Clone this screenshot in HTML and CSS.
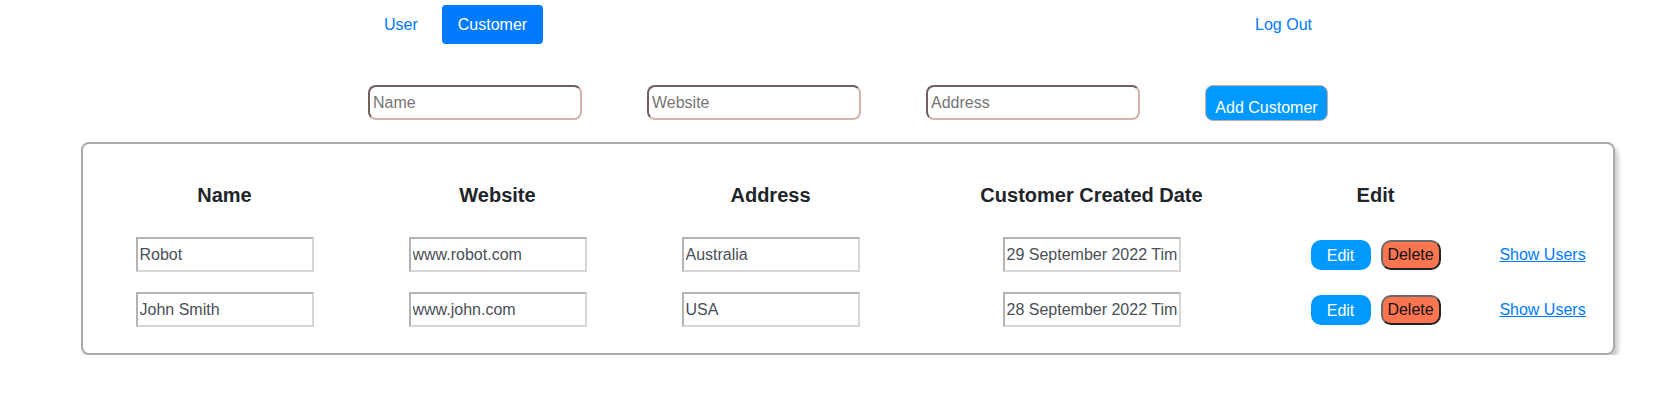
FILE: index.html
```html
<!DOCTYPE html>
<html lang="en">
<head>
<meta charset="utf-8">
<title>Customers</title>
<link rel="stylesheet" href="styles.css">
</head>
<body>
<nav class="nav">
  <div class="nav-left">
    <a class="nav-link" href="#">User</a>
    <a class="nav-link active" href="#">Customer</a>
  </div>
  <a class="nav-link" href="#">Log Out</a>
</nav>

<form class="add-form">
  <input class="add-input" type="text" placeholder="Name">
  <input class="add-input" type="text" placeholder="Website">
  <input class="add-input" type="text" placeholder="Address">
  <button class="add-btn" type="button">Add Customer</button>
</form>

<div class="card">
  <div class="table">
    <div class="th">Name</div>
    <div class="th">Website</div>
    <div class="th">Address</div>
    <div class="th">Customer Created Date</div>
    <div class="th">Edit</div>
    <div class="th"></div>

    <div class="td"><input class="cell-input" type="text" value="Robot"></div>
    <div class="td"><input class="cell-input" type="text" value="www.robot.com"></div>
    <div class="td"><input class="cell-input" type="text" value="Australia"></div>
    <div class="td"><input class="cell-input" type="text" value="29 September 2022 Time: 10:15"></div>
    <div class="td actions"><button class="btn-edit" type="button">Edit</button><button class="btn-delete" type="button">Delete</button></div>
    <div class="td"><a class="show-link" href="#">Show Users</a></div>

    <div class="td"><input class="cell-input" type="text" value="John Smith"></div>
    <div class="td"><input class="cell-input" type="text" value="www.john.com"></div>
    <div class="td"><input class="cell-input" type="text" value="USA"></div>
    <div class="td"><input class="cell-input" type="text" value="28 September 2022 Time: 09:40"></div>
    <div class="td actions"><button class="btn-edit" type="button">Edit</button><button class="btn-delete" type="button">Delete</button></div>
    <div class="td"><a class="show-link" href="#">Show Users</a></div>
  </div>
</div>
</body>
</html>
```

FILE: styles.css
```css
* { box-sizing: border-box; }

body {
  margin: 0;
  font-family: "Liberation Sans", Arial, sans-serif;
  font-size: 16px;
  color: #212529;
  background: #fff;
}

.nav {
  display: flex;
  justify-content: space-between;
  align-items: center;
  margin-left: 368px;
  width: 960px;
  padding-top: 5px;
}

.nav-left {
  display: flex;
  gap: 8px;
}

.nav-link {
  display: block;
  padding: 8px 16px;
  line-height: 23px;
  color: #007bff;
  text-decoration: none;
  border-radius: 4px;
}

.nav-link.active {
  background: #007bff;
  color: #fff;
}

.add-form {
  display: flex;
  align-items: flex-start;
  gap: 65px;
  margin: 41px 0 0 368px;
}

.add-input {
  width: 214px;
  height: 35px;
  padding: 0 3px;
  font-family: "Liberation Sans", Arial, sans-serif;
  font-size: 16px;
  color: #495057;
  border: 2px solid;
  border-color: #725f5f #d2b3ae #d2b3ae #725f5f;
  border-radius: 8px;
  background: #fff;
}

.add-input::placeholder {
  color: #757575;
}

.add-btn {
  width: 123px;
  height: 36px;
  padding: 13px 0 3px;
  white-space: nowrap;
  font-family: "Liberation Sans", Arial, sans-serif;
  font-size: 16px;
  line-height: 18px;
  color: #fff;
  background: #0099ff;
  border: 1px solid #c9aca8;
  border-radius: 8px;
}

.card {
  margin: 21px 0 0 81px;
  width: 1534px;
  height: 213px;
  border: 2px solid #aaaaaa;
  border-radius: 8px;
  box-shadow: 3px 5px 5px #c8c8c8;
  padding: 39px 0 0 5px;
}

.table {
  display: grid;
  grid-template-columns: 273px 273px 273px 369px 199px 135px;
  row-gap: 20px;
  align-items: center;
}

.th {
  text-align: center;
  font-weight: bold;
  font-size: 20px;
  line-height: 24px;
  padding-bottom: 10px;
  color: #212529;
}

.td {
  display: flex;
  justify-content: center;
  align-items: center;
  height: 35px;
}

.cell-input {
  width: 178px;
  height: 35px;
  padding: 0 2px;
  font-family: "Liberation Sans", Arial, sans-serif;
  font-size: 16px;
  color: #495057;
  border: 2px solid;
  border-color: #b3b3b3 #d6d6d6 #d6d6d6 #b3b3b3;
  background: #fff;
}

.actions {
  gap: 10px;
}

.btn-edit {
  width: 60px;
  height: 30px;
  padding: 3px 0 0;
  font-family: "Liberation Sans", Arial, sans-serif;
  font-size: 16px;
  color: #fff;
  background: #0099ff;
  border: none;
  border-radius: 10px;
}

.btn-delete {
  width: 60px;
  height: 30px;
  padding: 0;
  font-family: "Liberation Sans", Arial, sans-serif;
  font-size: 16px;
  color: #111;
  background: #ff7550;
  border: 2px solid;
  border-color: #6b6b6b #222 #222 #6b6b6b;
  border-radius: 10px;
}

.show-link {
  color: #007bff;
  text-decoration: underline;
  font-size: 16px;
}
```
